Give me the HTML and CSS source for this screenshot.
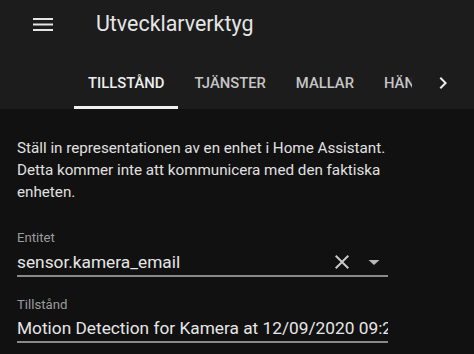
FILE: index.html
```html
<!DOCTYPE html>
<html lang="sv">
<head>
<meta charset="utf-8">
<link rel="stylesheet" href="styles.css">
</head>
<body>
<header class="appbar">
  <div class="toolbar">
    <button class="menu-btn" aria-label="Meny">
      <svg width="20" height="14" viewBox="0 0 20 14"><rect x="0" y="0" width="20" height="2" fill="#e4e4e4"/><rect x="0" y="5.5" width="20" height="2" fill="#e4e4e4"/><rect x="0" y="11" width="20" height="2" fill="#e4e4e4"/></svg>
    </button>
    <div class="title">Utvecklarverktyg</div>
  </div>
  <nav class="tabs">
    <div class="tab-scroll">
      <div class="tab active">TILLSTÅND</div>
      <div class="tab">TJÄNSTER</div>
      <div class="tab">MALLAR</div>
      <div class="tab">HÄNDELSER</div>
    </div>
    <div class="tab-arrow">
      <svg width="24" height="24" viewBox="0 0 24 24"><path d="M8.59 16.59 13.17 12 8.59 7.41 10 6l6 6-6 6z" fill="#ececec"/></svg>
    </div>
  </nav>
</header>
<main class="content">
  <p class="intro">Ställ in representationen av en enhet i Home Assistant.<br>Detta kommer inte att kommunicera med den faktiska enheten.</p>
  <div class="field">
    <label class="field-label">Entitet</label>
    <div class="field-row">
      <span class="field-value">sensor.kamera_email</span>
      <svg class="clear" width="24" height="24" viewBox="0 0 24 24"><path d="M19 6.41 17.59 5 12 10.59 6.41 5 5 6.41 10.59 12 5 17.59 6.41 19 12 13.41 17.59 19 19 17.59 13.41 12z" fill="#c8c8c8"/></svg>
      <svg class="drop" width="24" height="24" viewBox="0 0 24 24"><path d="M6.5 10l5.5 5 5.5-5z" fill="#b8b8b8"/></svg>
    </div>
  </div>
  <div class="field second">
    <label class="field-label">Tillstånd</label>
    <div class="field-row">
      <span class="field-value">Motion Detection for Kamera at 12/09/2020 09:25:43</span>
    </div>
  </div>
</main>
</body>
</html>
```
FILE: styles.css
```css
* { box-sizing: border-box; }
html, body { margin: 0; padding: 0; }
body {
  width: 474px;
  height: 354px;
  overflow: hidden;
  background: #111111;
  font-family: Roboto, "Noto Sans", sans-serif;
  color: #e1e1e1;
}
.appbar {
  background: #1c1c1c;
  height: 109px;
}
.toolbar {
  height: 48px;
  display: flex;
  align-items: center;
  padding-left: 33px;
}
.menu-btn {
  background: none;
  border: 0;
  padding: 0;
  width: 20px;
  height: 14px;
  display: flex;
  margin-top: 2px;
}
.title {
  margin-left: 43px;
  font-size: 21.4px;
  line-height: 24px;
  color: #e6e6e6;
}
.tabs {
  height: 61px;
  display: flex;
  padding-left: 74px;
}
.tab-scroll {
  display: flex;
  gap: 2px;
  width: 338px;
  overflow: hidden;
}
.tab {
  flex: none;
  font-size: 14.8px;
  line-height: 20px;
  font-weight: 500;
  color: #c6c6c6;
  padding: 12px 14px 0;
  height: 61px;
  display: flex;
  align-items: center;
  border-bottom: 3px solid transparent;
}
.tab.active {
  color: #eeeeee;
  border-bottom-color: #f0f0f0;
}
.tab-arrow {
  width: 62px;
  display: flex;
  align-items: center;
  justify-content: center;
  padding-top: 12px;
  padding-bottom: 3px;
}
.content {
  padding: 28px 17px 0;
}
.intro {
  margin: 0;
  width: 390px;
  font-size: 15.2px;
  line-height: 22px;
  color: #e0e0e0;
}
.field {
  width: 371px;
  margin-top: 27px;
}
.field.second { margin-top: 20px; }
.field-label {
  display: block;
  font-size: 13.2px;
  color: #9c9c9c;
  line-height: 16px;
}
.field-row {
  display: flex;
  align-items: center;
  padding-top: 6px;
  padding-bottom: 3px;
  border-bottom: 2px solid #8a8a8a;
}
.field.second .field-row { padding-top: 5px; }
.field-value {
  flex: 1;
  font-size: 17.3px;
  line-height: 20px;
  color: #e6e6e6;
  white-space: nowrap;
  overflow: hidden;
}
.clear { margin: -2px 7.5px -2px 0; }
.drop { margin: -2px 2.5px -2px 0; }
```
